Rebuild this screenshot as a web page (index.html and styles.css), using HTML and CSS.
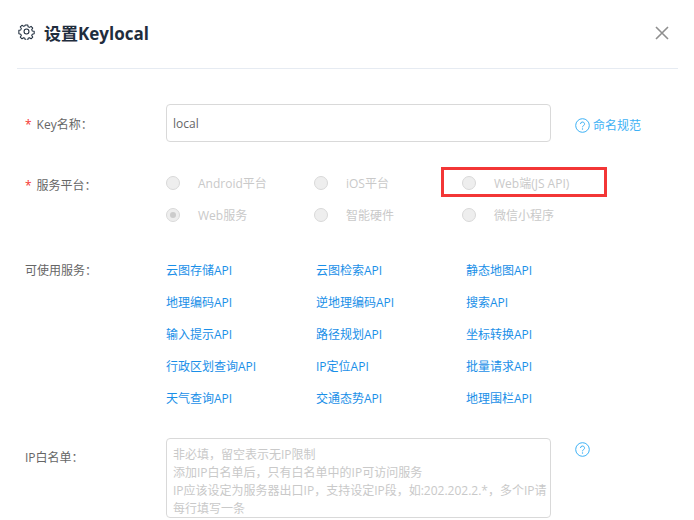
FILE: index.html
```html
<!DOCTYPE html>
<html lang="zh">
<head>
    <meta charset="UTF-8">
    <meta name="viewport" content="width=device-width, initial-scale=1.0">
    <title>设置Keylocal</title>
    <link rel="stylesheet" href="styles.css">
</head>
<body>
    <div class="dialog">
        <div class="dialog-header">
            <svg class="gear" viewBox="0 0 16 16" width="17" height="17">
                <path d="M6.7 1h2.6l.4 2 1.4.6 1.7-1.1 1.8 1.8-1.1 1.7.6 1.4 2 .4v2.6l-2 .4-.6 1.4 1.1 1.7-1.8 1.8-1.7-1.1-1.4.6-.4 2H6.7l-.4-2-1.4-.6-1.7 1.1-1.8-1.8 1.1-1.7-.6-1.4-2-.4V6.7l2-.4.6-1.4-1.1-1.7 1.8-1.8 1.7 1.1 1.4-.6z" transform="translate(.9 .9) scale(.89)" fill="none" stroke="#1f2d3d" stroke-width="1.1" stroke-linejoin="round"/>
                <circle cx="8" cy="8" r="2.3" fill="none" stroke="#1f2d3d" stroke-width="1"/>
            </svg>
            <h1>设置Keylocal</h1>
            <svg class="close" viewBox="0 0 14 14" width="14" height="14">
                <path d="M1 1l12 12M13 1L1 13" stroke="#8f8f8f" stroke-width="1.6" fill="none"/>
            </svg>
        </div>

        <div class="form-row row-name">
            <label class="form-label"><span class="required">*</span>Key名称：</label>
            <input class="text-input" type="text" value="local">
            <a class="help">
                <svg viewBox="0 0 15 15" width="15" height="15">
                    <circle cx="7.5" cy="7.5" r="6.8" fill="none" stroke="#3db1f5" stroke-width="1"/>
                    <path d="M5.5 6a2 2 0 1 1 3 1.7c-.7.4-1 .8-1 1.6" fill="none" stroke="#3db1f5" stroke-width="1"/>
                    <circle cx="7.5" cy="11" r=".7" fill="#3db1f5"/>
                </svg>
                命名规范
            </a>
        </div>

        <div class="form-row row-platform">
            <label class="form-label"><span class="required">*</span>服务平台：</label>
            <div class="radio-grid">
                <div class="radio"><span class="dot"></span>Android平台</div>
                <div class="radio"><span class="dot"></span>iOS平台</div>
                <div class="radio highlighted"><span class="dot"></span>Web端(JS API)</div>
                <div class="radio"><span class="dot checked"></span>Web服务</div>
                <div class="radio"><span class="dot"></span>智能硬件</div>
                <div class="radio"><span class="dot"></span>微信小程序</div>
            </div>
        </div>

        <div class="form-row row-services">
            <label class="form-label">可使用服务：</label>
            <div class="service-grid">
                <a>云图存储API</a>
                <a>云图检索API</a>
                <a>静态地图API</a>
                <a>地理编码API</a>
                <a>逆地理编码API</a>
                <a>搜索API</a>
                <a>输入提示API</a>
                <a>路径规划API</a>
                <a>坐标转换API</a>
                <a>行政区划查询API</a>
                <a>IP定位API</a>
                <a>批量请求API</a>
                <a>天气查询API</a>
                <a>交通态势API</a>
                <a>地理围栏API</a>
            </div>
        </div>

        <div class="form-row row-ip">
            <label class="form-label">IP白名单：</label>
            <textarea class="text-area" placeholder="非必填，留空表示无IP限制&#10;添加IP白名单后，只有白名单中的IP可访问服务&#10;IP应该设定为服务器出口IP，支持设定IP段，如:202.202.2.*，多个IP请每行填写一条"></textarea>
            <a class="help help-icon">
                <svg viewBox="0 0 15 15" width="15" height="15">
                    <circle cx="7.5" cy="7.5" r="6.8" fill="none" stroke="#3db1f5" stroke-width="1"/>
                    <path d="M5.5 6a2 2 0 1 1 3 1.7c-.7.4-1 .8-1 1.6" fill="none" stroke="#3db1f5" stroke-width="1"/>
                    <circle cx="7.5" cy="11" r=".7" fill="#3db1f5"/>
                </svg>
            </a>
        </div>
    </div>
</body>
</html>
```

FILE: styles.css
```css
html, body {
    height: 520px;
    overflow: hidden;
}
body {
    font-family: "Open Sans", "Noto Sans CJK SC", sans-serif;
    font-size: 12px;
    margin: 0;
    background-color: #fff;
    color: #666;
}
.dialog {
    padding: 0 16px 0 17px;
}
.dialog-header {
    display: flex;
    align-items: center;
    height: 68px;
    border-bottom: 1px solid #e6ebf2;
}
.gear {
    margin: 0 9px 5px 1px;
}
h1 {
    flex: 1;
    margin: 0 0 4px;
    font-size: 17px;
    font-weight: 700;
    color: #1f2d3d;
}
.close {
    margin: 0 9px 3px 0;
}
.form-row {
    display: flex;
    align-items: flex-start;
}
.form-label {
    width: 149px;
    padding-left: 8px;
    box-sizing: border-box;
    flex-shrink: 0;
    line-height: 18px;
    white-space: nowrap;
}
.required {
    color: #f5322d;
    margin-right: 5px;
}
.row-name {
    margin-top: 35px;
}
.row-name .form-label {
    padding-top: 12px;
}
.text-input,
.text-area {
    width: 385px;
    box-sizing: border-box;
    border: 1px solid #d9d9d9;
    border-radius: 4px;
    font-family: inherit;
    font-size: 12px;
    color: #666;
    background: #fff;
    outline: none;
}
.text-input {
    height: 38px;
    padding: 0 6px;
}
.help {
    display: flex;
    align-items: center;
    gap: 3px;
    margin: 14px 0 0 24px;
    color: #3db1f5;
    line-height: 15px;
}
.row-platform {
    margin-top: 25px;
}
.row-platform .form-label {
    padding-top: 10px;
}
.radio-grid {
    display: grid;
    grid-template-columns: 148px 148px 170px;
    grid-auto-rows: 32px;
}
.radio {
    position: relative;
    display: flex;
    align-items: center;
    color: #c9c9c9;
    white-space: nowrap;
}
.dot {
    width: 14px;
    height: 14px;
    box-sizing: border-box;
    margin-right: 18px;
    border: 1px solid #d9d9d9;
    border-radius: 50%;
    background: #eee;
    display: flex;
    align-items: center;
    justify-content: center;
}
.dot.checked::after {
    content: "";
    width: 6px;
    height: 6px;
    border-radius: 50%;
    background: #ccc;
}
.highlighted::after {
    content: "";
    position: absolute;
    left: -21px;
    top: 0;
    width: 166px;
    height: 30px;
    box-sizing: border-box;
    border: 3px solid #f33636;
}
.row-services {
    margin-top: 24px;
}
.row-services .form-label {
    padding-top: 7px;
}
.service-grid {
    display: grid;
    grid-template-columns: 150px 150px 150px;
    grid-auto-rows: 32px;
    line-height: 32px;
    color: #1a8fe8;
}
.row-ip {
    margin-top: 23px;
}
.row-ip .form-label {
    padding-top: 11px;
}
.text-area {
    height: 80px;
    padding: 7px 2px 0 6px;
    line-height: 18px;
    resize: none;
    overflow: hidden;
}
.text-area::placeholder {
    color: #c9c9c9;
    opacity: 1;
}
.help-icon {
    margin-top: 4px;
}
```
